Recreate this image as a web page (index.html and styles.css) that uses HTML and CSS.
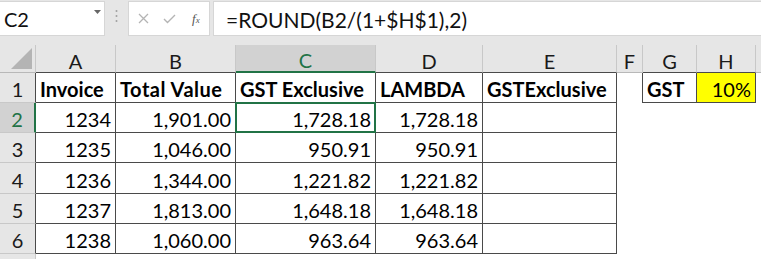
FILE: index.html
```html
<!DOCTYPE html>
<html>
<head>
<meta charset="utf-8">
<link rel="stylesheet" href="styles.css">
</head>
<body>
<div class="fbar">
  <div class="namebox">
    <span class="nb-text">C2</span>
    <svg class="nb-arrow" width="7" height="4" viewBox="0 0 7 4"><path d="M0 0H7L3.5 4Z" fill="#666"/></svg>
  </div>
  <div class="grip">
    <svg width="3" height="14" viewBox="0 0 3 14"><circle cx="1.5" cy="2" r="1" fill="#a0a0a0"/><circle cx="1.5" cy="7" r="1" fill="#a0a0a0"/><circle cx="1.5" cy="12" r="1" fill="#a0a0a0"/></svg>
  </div>
  <div class="fbtns">
    <svg width="11" height="11" viewBox="0 0 11 11"><path d="M1 1L10 10M10 1L1 10" stroke="#b4b4b4" stroke-width="1.3" fill="none"/></svg>
    <svg width="13" height="10" viewBox="0 0 13 10"><path d="M1 5L4.5 8.5L12 1" stroke="#b4b4b4" stroke-width="1.4" fill="none"/></svg>
    <span class="fx">f<span class="fx-x">x</span></span>
  </div>
  <div class="formula">=ROUND(B2/(1+$H$1),2)</div>
</div>
<div class="sheet">
  <div class="corner"><span class="tri"></span></div>
  <div class="ch dk">A</div>
  <div class="ch dk">B</div>
  <div class="ch dk sel">C</div>
  <div class="ch dk">D</div>
  <div class="ch dk">E</div>
  <div class="ch">F</div>
  <div class="ch dk">G</div>
  <div class="ch dk">H</div>
  <div class="ch last"></div>

  <div class="rh">1</div>
  <div class="c b">Invoice</div>
  <div class="c b wide">Total Value</div>
  <div class="c b">GST Exclusive</div>
  <div class="c b">LAMBDA</div>
  <div class="c b">GSTExclusive</div>
  <div class="f1"></div>
  <div class="c b">GST</div>
  <div class="c r yel">10%</div>
  <div class="e"></div>

  <div class="rh rsel">2</div>
  <div class="c r">1234</div>
  <div class="c r">1,901.00</div>
  <div class="c r cur">1,728.18</div>
  <div class="c r">1,728.18</div>
  <div class="c"></div>
  <div class="e"></div><div class="e"></div><div class="e"></div><div class="e"></div>

  <div class="rh">3</div>
  <div class="c r">1235</div>
  <div class="c r">1,046.00</div>
  <div class="c r">950.91</div>
  <div class="c r">950.91</div>
  <div class="c"></div>
  <div class="e"></div><div class="e"></div><div class="e"></div><div class="e"></div>

  <div class="rh">4</div>
  <div class="c r">1236</div>
  <div class="c r">1,344.00</div>
  <div class="c r">1,221.82</div>
  <div class="c r">1,221.82</div>
  <div class="c"></div>
  <div class="e"></div><div class="e"></div><div class="e"></div><div class="e"></div>

  <div class="rh">5</div>
  <div class="c r">1237</div>
  <div class="c r">1,813.00</div>
  <div class="c r">1,648.18</div>
  <div class="c r">1,648.18</div>
  <div class="c"></div>
  <div class="e"></div><div class="e"></div><div class="e"></div><div class="e"></div>

  <div class="rh">6</div>
  <div class="c r">1238</div>
  <div class="c r">1,060.00</div>
  <div class="c r">963.64</div>
  <div class="c r">963.64</div>
  <div class="c"></div>
  <div class="e"></div><div class="e"></div><div class="e"></div><div class="e"></div>

  <div class="rh rlast"></div>
  <div class="e"></div><div class="e"></div><div class="e"></div><div class="e"></div><div class="e"></div><div class="e"></div><div class="e"></div><div class="e"></div><div class="e"></div>
</div>
</body>
</html>
```
FILE: styles.css
```css
html, body {
  margin: 0;
  padding: 0;
  background: #ffffff;
}
body {
  width: 761px;
  height: 259px;
  overflow: hidden;
  font-family: Lato, "Liberation Sans", sans-serif;
  color: #000;
}
.fbar {
  display: flex;
  align-items: flex-start;
  height: 45px;
  box-sizing: border-box;
  padding-top: 1px;
  background: #e6e6e6;
}
.namebox {
  position: relative;
  width: 105px;
  height: 35px;
  box-sizing: border-box;
  background: #fff;
  border: 1px solid #d6d6d6;
  border-left: none;
  display: flex;
  align-items: center;
  padding-left: 4px;
}
.nb-text {
  font-size: 20px;
  color: #111;
  padding-top: 1px;
}
.nb-arrow {
  position: absolute;
  left: 94px;
  top: 8px;
}
.grip {
  width: 23px;
  height: 35px;
  display: flex;
  justify-content: center;
  align-items: flex-start;
  padding-top: 8px;
  box-sizing: border-box;
}
.fbtns {
  width: 82px;
  height: 35px;
  box-sizing: border-box;
  background: #fff;
  border: 1px solid #d6d6d6;
  display: flex;
  align-items: center;
  padding-left: 9px;
  gap: 14px;
}
.fx {
  font-family: "Liberation Serif", serif;
  font-style: italic;
  font-size: 13px;
  color: #555;
  margin-left: 2px;
}
.fx-x {
  font-size: 9px;
}
.formula {
  flex: 1;
  margin-left: 3px;
  height: 35px;
  box-sizing: border-box;
  background: #fff;
  border: 1px solid #d6d6d6;
  border-right: none;
  display: flex;
  align-items: center;
  padding-left: 12px;
  font-size: 21px;
  color: #111;
  padding-top: 1px;
}
.sheet {
  display: grid;
  grid-template-columns: 36px 80px 120px 140px 107px 134px 26px 54px 59px 1fr;
  grid-template-rows: 28px 30px 30px 30px 31px 30px 30px 1fr;
  height: 214px;
}
.sheet > div {
  box-sizing: border-box;
  min-width: 0;
}
.corner {
  position: relative;
  background: #e6e6e6;
  border-right: 1px solid #c8c8c8;
  border-bottom: 1px solid #b8b8b8;
}
.tri {
  position: absolute;
  right: 3px;
  bottom: 3px;
  width: 0;
  height: 0;
  border-left: 21px solid transparent;
  border-bottom: 21px solid #b4b4b4;
}
.ch {
  background: #e6e6e6;
  border-right: 1px solid #c8c8c8;
  border-bottom: 1px solid #b8b8b8;
  display: flex;
  align-items: center;
  justify-content: center;
  font-size: 20px;
  color: #1a1a1a;
  padding-top: 4px;
}
.ch.dk {
  border-bottom-color: #4a4a4a;
}
.ch.sel {
  background: #d2d2d2;
  color: #217346;
  border-bottom: 2px solid #217346;
}
.ch.last {
  border-right: none;
}
.rh {
  background: #e6e6e6;
  border-right: 1px solid #4a4a4a;
  border-bottom: 1px solid #c8c8c8;
  display: flex;
  align-items: center;
  justify-content: center;
  font-size: 20px;
  color: #1a1a1a;
  padding-top: 3px;
}
.rh.rsel {
  background: #d2d2d2;
  color: #217346;
  border-right: 2px solid #217346;
}
.rh.rlast {
  border-right-color: #c8c8c8;
  border-bottom: none;
}
.c {
  border-right: 1px solid #4a4a4a;
  border-bottom: 1px solid #4a4a4a;
  display: flex;
  align-items: center;
  padding: 3px 4px 0 4px;
  font-size: 20px;
  white-space: nowrap;
  overflow: hidden;
}
.c.b {
  font-weight: 700;
}
.c.wide {
  letter-spacing: 0.5px;
}
.c.r {
  justify-content: flex-end;
}
.c.yel {
  background: #ffff00;
}
.c.cur {
  position: relative;
  overflow: visible;
}
.c.cur::after {
  content: "";
  position: absolute;
  top: -1px;
  left: -1px;
  right: -1px;
  bottom: -1px;
  border: 2px solid #217346;
  z-index: 2;
}
.f1 {
  border-right: 1px solid #4a4a4a;
}
.e {
  background: #fff;
}
```
